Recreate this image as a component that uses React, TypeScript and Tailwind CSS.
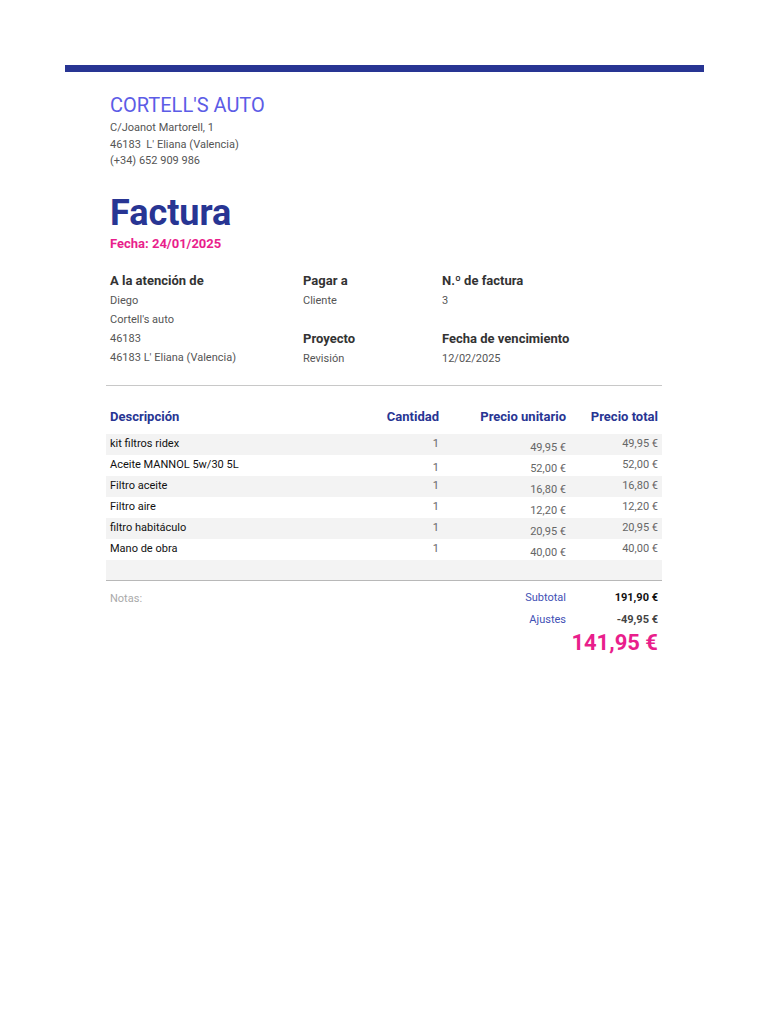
export default function App() {
  const rows = [
    ["kit filtros ridex", "49,95 €"],
    ["Aceite MANNOL 5w/30 5L", "52,00 €"],
    ["Filtro aceite", "16,80 €"],
    ["Filtro aire", "12,20 €"],
    ["filtro habitáculo", "20,95 €"],
    ["Mano de obra", "40,00 €"],
  ];
  return (
    <div className="w-[768px] h-[1024px] bg-white pt-[65px]" style={{ fontFamily: "Roboto, sans-serif" }}>
      <div className="ml-[65px] w-[639px] h-[7px] bg-[#283593]" />
      <div className="ml-[110px] mt-[21px]">
        <div className="text-[20px] leading-[24px] text-[#5c5ce6]">CORTELL'S AUTO</div>
        <div className="text-[11px] leading-[16.5px] text-[#555] mt-[3px]">
          <div>C/Joanot Martorell, 1</div>
          <div className="whitespace-pre">46183  L' Eliana (Valencia)</div>
          <div>(+34) 652 909 986</div>
        </div>
        <div className="text-[36px] leading-[40px] font-bold text-[#283593] mt-[23px]">Factura</div>
        <div className="text-[13px] leading-[16px] font-bold text-[#e91e8c] mt-[3px]">Fecha: 24/01/2025</div>
        <div className="flex mt-[20px] text-[11px] text-[#555]">
          <div className="w-[193px]">
            <div className="text-[13px] leading-[18px] font-bold text-[#333] mb-[1px]">A la atención de</div>
            <div className="leading-[19px]">Diego</div>
            <div className="leading-[19px]">Cortell's auto</div>
            <div className="leading-[19px]">46183</div>
            <div className="leading-[19px]">46183 L' Eliana (Valencia)</div>
          </div>
          <div className="w-[139px]">
            <div className="text-[13px] leading-[18px] font-bold text-[#333] mb-[1px]">Pagar a</div>
            <div className="leading-[19px]">Cliente</div>
            <div className="h-[20px]" />
            <div className="text-[13px] leading-[18px] font-bold text-[#333] mb-[1px]">Proyecto</div>
            <div className="leading-[19px]">Revisión</div>
          </div>
          <div>
            <div className="text-[13px] leading-[18px] font-bold text-[#333] mb-[1px]">N.º de factura</div>
            <div className="leading-[19px]">3</div>
            <div className="h-[20px]" />
            <div className="text-[13px] leading-[18px] font-bold text-[#333] mb-[1px]">Fecha de vencimiento</div>
            <div className="leading-[19px]">12/02/2025</div>
          </div>
        </div>
      </div>
      <div className="ml-[106px] w-[556px] mt-[17px] border-t border-[#c8c8c8]">
        <div className="flex items-center h-[32px] mt-[16px] text-[13px] font-bold text-[#283593] pb-[1px]">
          <div className="flex-1 pl-[4px]">Descripción</div>
          <div className="w-[100px] text-right">Cantidad</div>
          <div className="w-[127px] text-right">Precio unitario</div>
          <div className="w-[96px] text-right pr-[4px]">Precio total</div>
        </div>
        {rows.map(([d, p], i) => (
          <div key={i} className={`flex h-[21px] text-[11px] ${i % 2 === 0 ? "bg-[#f3f3f3]" : "bg-white"}`}>
            <div className="flex-1 pl-[4px] pt-[2px] text-[#111]">{d}</div>
            <div className={`w-[100px] text-right text-[#666] ${i === 1 ? "pt-[5px]" : "pt-[2px]"}`}>1</div>
            <div className="w-[127px] text-right text-[#666] pt-[6px]">{p}</div>
            <div className="w-[96px] text-right pr-[4px] text-[#666] pt-[2px]">{p}</div>
          </div>
        ))}
        <div className="h-[21px] bg-[#f3f3f3] border-b border-[#b8b8b8]" />
        <div className="flex text-[11px] mt-[10px]">
          <div className="flex-1 pl-[4px] text-[#aaa]">Notas:</div>
          <div className="text-right">
            <div className="text-[#3f51b5] leading-[22px] -mt-[4px]">Subtotal</div>
            <div className="text-[#3f51b5] leading-[22px]">Ajustes</div>
          </div>
          <div className="w-[96px] text-right pr-[4px]">
            <div className="font-bold text-[#111] leading-[22px] -mt-[4px]">191,90 €</div>
            <div className="font-bold text-[#444] leading-[22px]">-49,95 €</div>
          </div>
        </div>
        <div className="text-right pr-[4px] text-[22px] leading-[24px] font-bold text-[#e91e8c]">141,95 €</div>
      </div>
    </div>
  );
}
